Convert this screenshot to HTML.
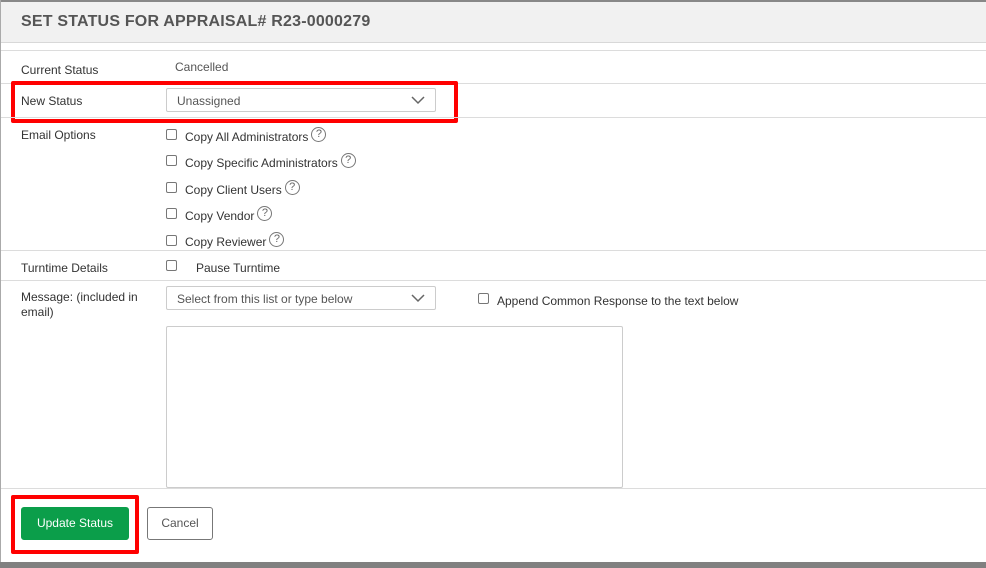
<!DOCTYPE html>
<html><head><style>
*{margin:0;padding:0;box-sizing:border-box}
body{width:986px;height:568px;background:#fff;font-family:"Liberation Sans Narrow","Liberation Sans",sans-serif;font-size:12px;color:#333;position:relative;overflow:hidden}
.a{position:absolute}
.hr{position:absolute;left:1px;right:0;height:1px;background:#dcdcdc}
.lbl{position:absolute;left:21px;font-size:12px;color:#333}
.cb{position:absolute;width:11px;height:11px;border:1px solid #777;border-radius:2px;background:#fff}
.q{display:inline-block;width:15px;height:15px;border:1px solid #777;border-radius:50%;font-size:11px;line-height:13px;text-align:center;color:#666;vertical-align:top;margin-left:3px;margin-top:-3px}
.sel{position:absolute;border:1px solid #ccc;border-radius:2px;background:#fff;color:#555}
.chev{position:absolute;right:10px;top:5px}
</style></head><body>
<div class="a" style="left:0;top:0;width:986px;height:2px;background:#888"></div>
<div class="a" style="left:0;top:0;width:1px;height:568px;background:#aaa"></div>
<div class="a" style="left:1px;top:2px;width:985px;height:41px;background:#f1f1f1;border-bottom:1px solid #d8d8d8"></div>
<div class="a" style="left:21px;top:13px;font-size:16px;font-weight:bold;color:#555;font-family:'Liberation Sans',sans-serif;letter-spacing:0.2px">SET STATUS FOR APPRAISAL# R23-0000279</div>
<div class="hr" style="top:50px"></div>
<div class="lbl" style="top:63px">Current Status</div>
<div class="a" style="left:175px;top:60px;color:#555">Cancelled</div>
<div class="hr" style="top:83px"></div>
<div class="lbl" style="top:94px">New Status</div>
<div class="sel" style="left:166px;top:88px;width:270px;height:24px"><span class="a" style="left:10px;top:5px">Unassigned</span><svg class="chev" width="14" height="12" viewBox="0 0 14 12"><path d="M1 3l6 6 6-6" stroke="#666" stroke-width="1.5" fill="none"/></svg></div>
<div class="a" style="left:11px;top:81px;width:447px;height:42px;border:4px solid #f00;border-radius:2px"></div>
<div class="hr" style="top:117px"></div>
<div class="lbl" style="top:128px">Email Options</div>
<div class="cb" style="left:166px;top:129px"></div><div class="a" style="left:185px;top:130px">Copy All Administrators<span class="q">?</span></div>
<div class="cb" style="left:166px;top:155px"></div><div class="a" style="left:185px;top:156px">Copy Specific Administrators<span class="q">?</span></div>
<div class="cb" style="left:166px;top:182px"></div><div class="a" style="left:185px;top:183px">Copy Client Users<span class="q">?</span></div>
<div class="cb" style="left:166px;top:208px"></div><div class="a" style="left:185px;top:209px">Copy Vendor<span class="q">?</span></div>
<div class="cb" style="left:166px;top:235px"></div><div class="a" style="left:185px;top:235px">Copy Reviewer<span class="q">?</span></div>
<div class="hr" style="top:250px"></div>
<div class="lbl" style="top:261px">Turntime Details</div>
<div class="cb" style="left:166px;top:260px"></div><div class="a" style="left:196px;top:261px">Pause Turntime</div>
<div class="hr" style="top:280px"></div>
<div class="lbl" style="top:290px;line-height:15px">Message: (included in<br>email)</div>
<div class="sel" style="left:166px;top:286px;width:270px;height:24px"><span class="a" style="left:10px;top:5px">Select from this list or type below</span><svg class="chev" width="14" height="12" viewBox="0 0 14 12"><path d="M1 3l6 6 6-6" stroke="#666" stroke-width="1.5" fill="none"/></svg></div>
<div class="cb" style="left:478px;top:293px"></div><div class="a" style="left:497px;top:294px">Append Common Response to the text below</div>
<div class="a" style="left:166px;top:326px;width:457px;height:162px;border:1px solid #ccc;border-radius:2px"></div>
<div class="hr" style="top:488px"></div>
<div class="a" style="left:11px;top:495px;width:128px;height:59px;border:4px solid #f00;border-radius:2px"></div>
<div class="a" style="left:21px;top:507px;width:108px;height:33px;background:#0b9e4a;border-radius:3px;color:#fff;text-align:center;line-height:33px">Update Status</div>
<div class="a" style="left:147px;top:507px;width:66px;height:33px;border:1px solid #777;border-radius:3px;color:#555;text-align:center;line-height:31px">Cancel</div>
<div class="a" style="left:0;top:562px;width:986px;height:6px;background:#808080"></div>
</body></html>
